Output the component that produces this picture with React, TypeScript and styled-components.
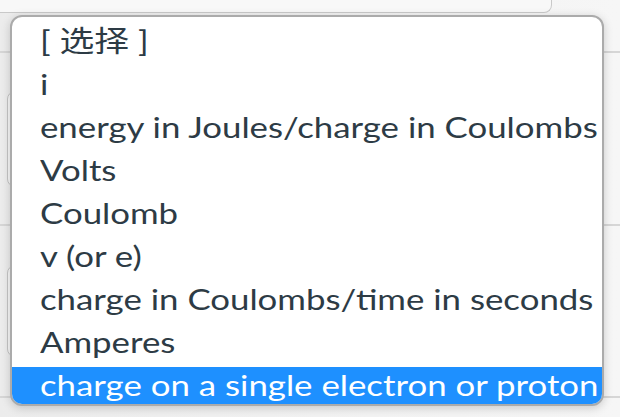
import React from 'react';
import styled, {createGlobalStyle} from 'styled-components';

const GlobalStyle = createGlobalStyle`
  html, body {
    margin: 0;
    padding: 0;
    background: #efefef;
    font-family: Lato, "Noto Sans CJK SC", sans-serif;
  }
  #root {
    width: 620px;
    height: 417px;
    overflow: hidden;
  }
`;

const Page = styled.div`
  position: relative;
  width: 620px;
  height: 417px;
  background: linear-gradient(to right, #ececec, #f3f3f3 60%, #f6f6f6);
  display: flex;
  flex-direction: column;
`;

const TopCard = styled.div`
  height: 13px;
  width: 560px;
  margin-left: -8px;
  box-sizing: border-box;
  background: #f8f8f8;
  border: 1px solid #c9c9c9;
  border-top: none;
  border-radius: 0 0 8px 8px;
`;

const Section = styled.div<{ $height: number }>`
  height: ${p => p.$height}px;
  border-top: 2px solid #d6d6d6;
  box-sizing: border-box;
  display: flex;
  align-items: center;
`;

const FieldBox = styled.div<{ $height: number }>`
  margin-left: 7px;
  width: 300px;
  height: ${p => p.$height}px;
  box-sizing: border-box;
  border: 1px solid #c4c4c4;
  border-radius: 8px;
  background: #f7f7f7;
`;

const Spacer = styled.div<{ $height: number }>`
  height: ${p => p.$height}px;
`;

const Dropdown = styled.ul`
  position: absolute;
  left: 10px;
  top: 15px;
  width: 594px;
  height: 391px;
  margin: 0;
  padding: 6px 0 0;
  list-style: none;
  box-sizing: border-box;
  background: #fff;
  border: 2px solid #ababab;
  border-radius: 12px;
  overflow: hidden;
  box-shadow: 0 2px 10px rgba(0, 0, 0, 0.18);
`;

const Option = styled.li<{ $selected?: boolean }>`
  height: 43px;
  line-height: 36px;
  padding-left: 28px;
  font-size: 29px;
  white-space: nowrap;
  color: ${p => (p.$selected ? '#ffffff' : '#2d3b45')};
  background: ${p => (p.$selected ? '#1e90ff' : 'transparent')};
`;

// the captured popup is drawn wider than the font's natural width
const OptionText = styled.span`
  display: inline-block;
  transform: scaleX(1.2);
  transform-origin: left center;
`;

const options = [
  '[ 选择 ]',
  'i',
  'energy in Joules/charge in Coulombs',
  'Volts',
  'Coulomb',
  'v (or e)',
  'charge in Coulombs/time in seconds',
  'Amperes',
  'charge on a single electron or proton',
];

export default function App() {
  return (
    <>
      <GlobalStyle/>
      <Page>
        <TopCard/>
        <Spacer $height={38}/>
        <Section $height={173}>
          <FieldBox $height={96}/>
        </Section>
        <Section $height={172}>
          <FieldBox $height={92}/>
        </Section>
        <Section $height={21}/>
        <Dropdown>
          {options.map((o, i) => (
            <Option key={o} $selected={i === options.length - 1}>
              <OptionText>{o}</OptionText>
            </Option>
          ))}
        </Dropdown>
      </Page>
    </>
  );
}
